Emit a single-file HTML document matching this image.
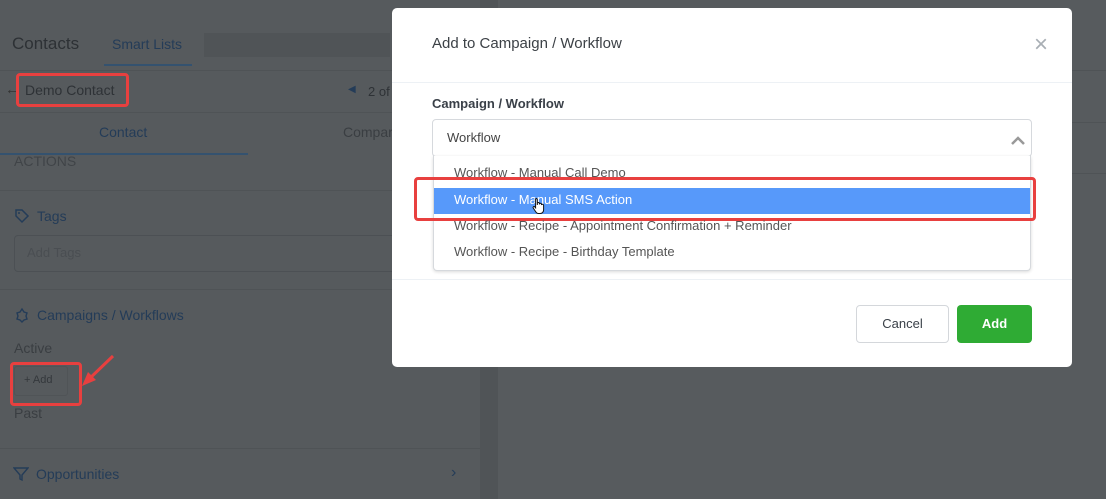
<!DOCTYPE html>
<html><head><meta charset="utf-8"><style>
*{box-sizing:border-box;margin:0;padding:0}
body{width:1106px;height:499px;overflow:hidden;background:#575b5e;font-family:"Liberation Sans",Arial,sans-serif;position:relative}
.a{position:absolute}
.hl{position:absolute;height:1px;background:#4f5356}
.t{position:absolute;white-space:nowrap}
.red{position:absolute;border:3px solid #e8403f;border-radius:4px}
.bl{color:#243c58}
</style></head><body>
<div class="a" style="left:0;top:0;width:480px;height:499px;background:#565a5d"></div>
<div class="a" style="left:480px;top:0;width:18px;height:499px;background:#505457"></div>
<div class="t" style="left:12px;top:34px;font-size:17px;color:#2d3135">Contacts</div>
<div class="t bl" style="left:112px;top:36px;font-size:14px">Smart Lists</div>
<div class="a" style="left:104px;top:64px;width:88px;height:2px;background:#34526f"></div>
<div class="a" style="left:204px;top:33px;width:186px;height:24px;background:#505457"></div>
<div class="hl" style="left:0;top:70px;width:392px"></div>
<div class="t" style="left:5px;top:81px;font-size:15px;color:#333">←</div>
<div class="t" style="left:25px;top:82px;font-size:14px;color:#2e3236">Demo Contact</div>
<div class="red" style="left:16px;top:73px;width:113px;height:34px"></div>
<div class="t bl" style="left:348px;top:84px;font-size:10px">◀</div>
<div class="t" style="left:368px;top:84px;font-size:13px;color:#2e3236">2 of</div>
<div class="hl" style="left:0;top:112px;width:392px"></div>
<div class="t bl" style="left:99px;top:124px;font-size:14px">Contact</div>
<div class="t" style="left:343px;top:124px;font-size:14px;color:#3a3e42">Compar</div>
<div class="a" style="left:0;top:153px;width:248px;height:2px;background:#34526f"></div>
<div class="t" style="left:14px;top:153px;font-size:14px;color:#404448">ACTIONS</div>
<div class="hl" style="left:0;top:190px;width:480px"></div>
<svg class="a" style="left:14px;top:208px" width="16" height="16" viewBox="0 0 16 16"><path d="M2 2h6l6 6-6 6-6-6z" fill="none" stroke="#243c58" stroke-width="1.5"/><circle cx="5" cy="5" r="1" fill="#243c58"/></svg>
<div class="t bl" style="left:37px;top:208px;font-size:14px">Tags</div>
<div class="a" style="left:14px;top:235px;width:400px;height:37px;border:1px solid #4c5054;border-radius:4px"></div>
<div class="t" style="left:27px;top:245px;font-size:13px;color:#4a4e52">Add Tags</div>
<div class="hl" style="left:0;top:289px;width:480px"></div>
<svg class="a" style="left:14px;top:307px" width="16" height="16" viewBox="0 0 16 16"><path d="M8 2l2 3 3 1-1 3 1 3-3 1-2 2-2-2-3-1 1-3-1-3 3-1z" fill="none" stroke="#243c58" stroke-width="1.4"/></svg>
<div class="t bl" style="left:37px;top:307px;font-size:14px">Campaigns / Workflows</div>
<div class="t" style="left:14px;top:340px;font-size:14px;color:#3a3e42">Active</div>
<div class="a" style="left:14px;top:366px;width:54px;height:30px;border:1px solid #505457;border-radius:3px"></div>
<div class="t" style="left:24px;top:374px;font-size:11px;color:#34383c">+ Add</div>
<div class="red" style="left:10px;top:362px;width:72px;height:44px"></div>
<svg class="a" style="left:78px;top:352px" width="40" height="40" viewBox="0 0 40 40"><path d="M35 4L8 30" stroke="#e8403f" stroke-width="3"/><path d="M4 34l6-14 8 8z" fill="#e8403f"/></svg>
<div class="t" style="left:14px;top:405px;font-size:14px;color:#3a3e42">Past</div>
<div class="hl" style="left:0;top:448px;width:480px"></div>
<svg class="a" style="left:13px;top:466px" width="16" height="16" viewBox="0 0 16 16"><path d="M1 2h14l-6 7v5l-2-1V9z" fill="none" stroke="#243c58" stroke-width="1.4"/></svg>
<div class="t bl" style="left:36px;top:466px;font-size:14px">Opportunities</div>
<div class="t bl" style="left:451px;top:464px;font-size:16px">›</div>
<div class="hl" style="left:1072px;top:70px;width:34px"></div>
<div class="hl" style="left:1072px;top:122px;width:34px"></div>
<div class="hl" style="left:1072px;top:173px;width:34px"></div>
<div class="a" style="left:392px;top:8px;width:680px;height:359px;background:#fff;border-radius:5px"></div>
<div class="t" style="left:432px;top:35px;font-size:15px;color:#3c4146">Add to Campaign / Workflow</div>
<div class="t" style="left:1034px;top:31px;font-size:24px;color:#a8aeb4;font-weight:300">×</div>
<div class="a" style="left:392px;top:82px;width:680px;height:1px;background:#edf1f5"></div>
<div class="t" style="left:432px;top:96px;font-size:13px;color:#3a4048;font-weight:bold">Campaign / Workflow</div>
<div class="a" style="left:432px;top:119px;width:600px;height:38px;border:1px solid #d6d9dd;border-radius:4px"></div>
<div class="t" style="left:447px;top:130px;font-size:13px;color:#444">Workflow</div>
<svg class="a" style="left:1010px;top:135px" width="16" height="12" viewBox="0 0 16 12"><path d="M2 9l6-6 6 6" fill="none" stroke="#999" stroke-width="2.5"/></svg>
<div class="a" style="left:392px;top:279px;width:680px;height:1px;background:#edf1f5"></div>
<div class="a" style="left:433px;top:156px;width:598px;height:115px;background:#fff;border:1px solid #d6d9dd;border-top:none;border-radius:0 0 4px 4px;box-shadow:0 1px 3px rgba(0,0,0,.15)"></div>
<div class="t" style="left:454px;top:165px;font-size:13px;color:#555">Workflow - Manual Call Demo</div>
<div class="a" style="left:434px;top:188px;width:596px;height:26px;background:#5799fa"></div>
<div class="t" style="left:454px;top:192px;font-size:13px;color:#fff">Workflow - Manual SMS Action</div>
<div class="red" style="left:414px;top:177px;width:622px;height:44px"></div>
<svg class="a" style="left:532px;top:197px" width="14" height="18" viewBox="0 0 14 18"><path d="M4 1.5c.8 0 1.3.5 1.3 1.3V8l.1-2c.6-.8 1.9-.6 2 .4v1l.1-.6c.6-.8 1.9-.6 2 .4v.8l.1-.3c.6-.7 1.9-.5 2 .5V13c0 2-1.5 3.5-3.5 3.5H6.5c-1.2 0-2-.6-2.6-1.5L1.2 11c-.6-.9.6-2 1.5-1.2l.9 1V2.8C3.6 2 3.6 1.5 4 1.5z" fill="#fff" stroke="#111" stroke-width="1"/></svg>
<div class="t" style="left:454px;top:218px;font-size:13px;color:#555">Workflow - Recipe - Appointment Confirmation + Reminder</div>
<div class="t" style="left:454px;top:244px;font-size:13px;color:#555">Workflow - Recipe - Birthday Template</div>
<div class="a" style="left:856px;top:305px;width:93px;height:38px;border:1px solid #d4d7db;border-radius:4px;color:#3a4048;font-size:13px;text-align:center;line-height:36px">Cancel</div>
<div class="a" style="left:957px;top:305px;width:75px;height:38px;background:#2fab34;border-radius:4px;color:#fff;font-size:13px;font-weight:bold;text-align:center;line-height:38px">Add</div>
</body></html>
